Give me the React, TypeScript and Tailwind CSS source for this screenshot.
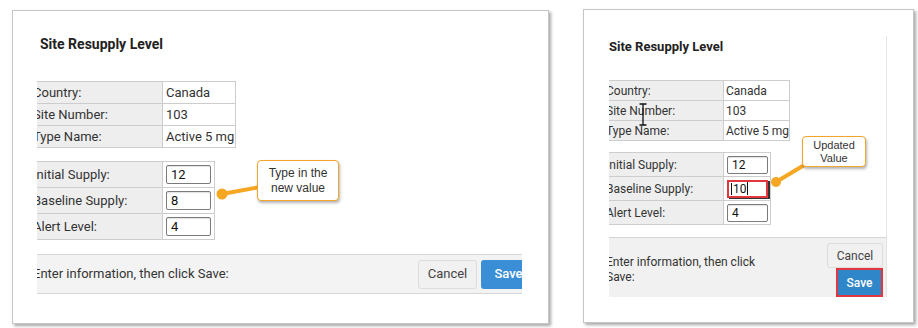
import React from "react";

const font = "font-['Roboto','Liberation_Sans',Arial,sans-serif]";

function InfoRow({ label, value, h, lw, vw, small }: { label: string; value: string; h: string; lw: string; vw: string; small?: boolean }) {
  return (
    <div className={`flex ${h} box-border border-b border-[#cdcdcd]`}>
      <div className={`${lw} shrink-0 bg-[#eeeeee] border-r border-[#cdcdcd] flex items-center pl-[1px] whitespace-nowrap ${small ? "text-[12px]" : "text-[13px]"} text-[#333]`}>{label}</div>
      <div className={`${vw} shrink-0 bg-white flex items-center ${small ? "pl-[2px]" : "pl-[3px]"} whitespace-nowrap ${small ? "text-[12px]" : "text-[13px]"} text-[#333]`}>{value}</div>
    </div>
  );
}

function InputRow({ label, value, h, lw, vw, iw, ih, small, highlight }: { label: string; value: string; h: string; lw: string; vw: string; iw: string; ih: string; small?: boolean; highlight?: boolean }) {
  return (
    <div className={`flex ${h} box-border border-b border-[#cdcdcd]`}>
      <div className={`${lw} shrink-0 bg-[#eeeeee] border-r border-[#cdcdcd] flex items-center pl-[1px] whitespace-nowrap ${small ? "text-[12px]" : "text-[13px]"} text-[#333]`}>{label}</div>
      <div className={`${vw} shrink-0 bg-white flex items-center pl-[3px]`}>
        {highlight ? (
          <div className={`${iw} ${ih} box-border border-2 border-[#e2373d] shadow-[2px_1px_0_#333] bg-white flex items-center pl-[2px] ${small ? "text-[12px]" : "text-[13px]"} text-[#111] leading-none`}>
            <span className="border-l border-[#111] pl-[1px]">10</span>
            <span className="w-[1px] h-[13px] bg-[#111]"></span>
          </div>
        ) : (
          <div className={`${iw} ${ih} box-border border border-[#7b7b7b] rounded-[2px] bg-white flex items-center pl-[4px] ${small ? "text-[12px]" : "text-[13px]"} text-[#111] shadow-[inset_0_1px_1px_rgba(0,0,0,0.12)]`}>{value}</div>
        )}
      </div>
    </div>
  );
}

export default function App() {
  return (
    <div className={`relative w-[918px] h-[328px] bg-white overflow-hidden ${font}`}>
      <div className="flex items-start">
        {/* Left panel */}
        <div className="ml-[12px] mt-[10px] w-[537px] h-[314px] box-border border border-[#c6c6c6] shadow-[2px_2px_3px_rgba(0,0,0,0.35)] bg-white pl-[24px] pr-[26px] pt-[26px]">
          <div className="overflow-hidden">
            <div className="pl-[3px] text-[14px] leading-[14px] h-[14px] font-bold text-[#222]">Site Resupply Level</div>
            <div className="mt-[30px] ml-[-5px] w-[204px] border-t border-r border-[#cdcdcd]">
              <InfoRow label="Country:" value="Canada" h="h-[22px]" lw="w-[131px]" vw="w-[72px]" />
              <InfoRow label="Site Number:" value="103" h="h-[22px]" lw="w-[131px]" vw="w-[72px]" />
              <InfoRow label="Type Name:" value="Active 5 mg" h="h-[22px]" lw="w-[131px]" vw="w-[72px]" />
            </div>
            <div className="mt-[13px] ml-[-5px] w-[183px] border-t border-r border-[#cdcdcd]">
              <InputRow label="Initial Supply:" value="12" h="h-[26px]" lw="w-[131px]" vw="w-[51px]" iw="w-[45px]" ih="h-[19px]" />
              <InputRow label="Baseline Supply:" value="8" h="h-[26px]" lw="w-[131px]" vw="w-[51px]" iw="w-[45px]" ih="h-[19px]" />
              <InputRow label="Alert Level:" value="4" h="h-[26px]" lw="w-[131px]" vw="w-[51px]" iw="w-[45px]" ih="h-[19px]" />
            </div>
            <div className="mt-[14px] ml-[-5px] w-[510px] h-[40px] box-border border-t border-b border-[#d6d6d6] bg-[#f3f3f3] flex items-center justify-between pr-[6px]">
              <div className="pl-[1px] text-[13px] text-[#333] whitespace-nowrap">Enter information, then click Save:</div>
              <div className="flex gap-[4px]">
                <div className="w-[59px] h-[29px] box-border border border-[#dcdcdc] rounded-[3px] bg-[#f1f1f1] flex items-center justify-center text-[13px] text-[#444]">Cancel</div>
                <div className="w-[55px] h-[29px] rounded-[3px] bg-[#3a8ed5] flex items-center justify-center text-[13px] font-medium text-white">Save</div>
              </div>
            </div>
          </div>
        </div>

        {/* Right panel */}
        <div className="ml-[34px] mt-[9px] w-[331px] h-[314px] box-border border border-[#c6c6c6] shadow-[2px_2px_3px_rgba(0,0,0,0.35)] bg-white pl-[25px] pt-[26px]">
          <div className="w-[278px] h-[261px] box-border border-r border-[#e4e4e4] overflow-hidden">
            <div className="pt-[4px] pl-[0px] text-[13px] leading-[13px] h-[17px] font-bold text-[#222]">Site Resupply Level</div>
            <div className="mt-[27px] ml-[-4px] w-[185px] border-t border-r border-[#cdcdcd]">
              <InfoRow label="Country:" value="Canada" h="h-[20px]" lw="w-[119px]" vw="w-[65px]" small />
              <InfoRow label="Site Number:" value="103" h="h-[20px]" lw="w-[119px]" vw="w-[65px]" small />
              <InfoRow label="Type Name:" value="Active 5 mg" h="h-[20px]" lw="w-[119px]" vw="w-[65px]" small />
            </div>
            <div className="mt-[11px] ml-[-4px] w-[166px] border-t border-r border-[#cdcdcd]">
              <InputRow label="Initial Supply:" value="12" h="h-[24px]" lw="w-[119px]" vw="w-[46px]" iw="w-[41px]" ih="h-[18px]" small />
              <InputRow label="Baseline Supply:" value="10" h="h-[24px]" lw="w-[119px]" vw="w-[46px]" iw="w-[41px]" ih="h-[18px]" small highlight />
              <InputRow label="Alert Level:" value="4" h="h-[24px]" lw="w-[119px]" vw="w-[46px]" iw="w-[41px]" ih="h-[18px]" small />
            </div>
            <div className="mt-[12px] ml-[-4px] w-[281px] h-[60px] box-border border-t border-[#d6d6d6] bg-[#f1f1f1] flex justify-between pr-[3px]">
              <div className="pl-[1px] pt-[17px] w-[160px] text-[12px] leading-[15px] text-[#333]">Enter information, then click Save:</div>
              <div className="flex flex-col items-end pt-[5px]">
                <div className="w-[56px] h-[25px] box-border border border-[#dcdcdc] rounded-[3px] bg-[#f1f1f1] flex items-center justify-center text-[12px] text-[#444]">Cancel</div>
                <div className="w-[47px] h-[29px] box-border border-2 border-[#e2373d] bg-[#2f86c9] flex items-center justify-center text-[12px] font-medium text-white">Save</div>
              </div>
            </div>
          </div>
        </div>
      </div>

      {/* Connectors and text cursor */}
      <svg className="absolute left-0 top-0" width="918" height="328">
        <line x1="222" y1="194" x2="260" y2="187" stroke="#f5a623" strokeWidth="4" />
        <circle cx="222" cy="194" r="5.5" fill="#f5a623" />
        <line x1="776" y1="182" x2="806" y2="164" stroke="#f5a623" strokeWidth="4" />
        <circle cx="776" cy="182" r="5" fill="#f5a623" />
        <g stroke="#111" strokeWidth="1.3" fill="none">
          <path d="M639.5 104 H646.5 M643 104 V125 M639.5 125 H646.5" />
        </g>
      </svg>

      {/* Callout 1 */}
      <div className="absolute left-[257px] top-[160px] w-[82px] h-[41px] box-border border-[1.5px] border-[#f2a52a] rounded-[4px] bg-white shadow-[1px_2px_3px_rgba(0,0,0,0.3)] flex flex-col items-center justify-center text-[12px] leading-[15px] text-[#333] font-['Liberation_Sans',Arial,sans-serif]">
        <div>Type in the</div>
        <div>new value</div>
      </div>

      {/* Callout 2 */}
      <div className="absolute left-[802px] top-[136px] w-[64px] h-[31px] box-border border-[1.5px] border-[#f2a52a] rounded-[4px] bg-white shadow-[1px_2px_3px_rgba(0,0,0,0.3)] flex flex-col items-center justify-center text-[11px] leading-[13px] text-[#333] font-['Liberation_Sans',Arial,sans-serif]">
        <div>Updated</div>
        <div>Value</div>
      </div>
    </div>
  );
}
